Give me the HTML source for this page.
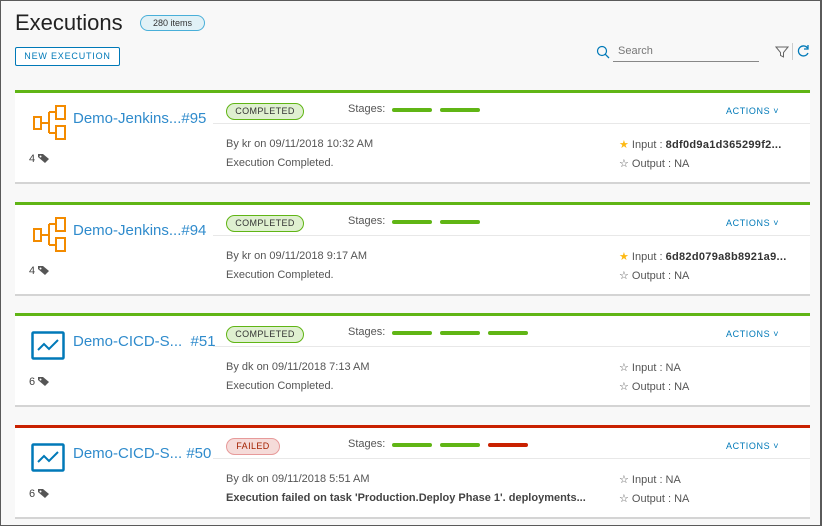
<!DOCTYPE html>
<html><head><meta charset="utf-8"><style>
*{box-sizing:border-box;margin:0;padding:0}
body{width:822px;height:526px;background:#f8f8f8;font-family:"Liberation Sans",sans-serif;position:relative;overflow:hidden;border:1px solid #5a5a5a;border-right:2px solid #5a5a5a}
.abs{position:absolute}
h1{position:absolute;left:14px;top:9px;font-size:22px;font-weight:400;color:#222}
.count{position:absolute;left:139px;top:14px;width:65px;height:16px;border:1px solid #49afd9;background:#e1f1f6;border-radius:9px;font-size:9px;color:#333;text-align:center;line-height:14px}
.btn{position:absolute;left:14px;top:46px;width:105px;height:19px;border:1px solid #0079b8;border-radius:2px;font-size:9px;letter-spacing:.8px;color:#0079b8;text-align:center;line-height:17px;background:#fff}
.search{position:absolute;left:612px;top:44px;width:146px;height:17px;border-bottom:1px solid #888;font-size:11px;color:#777;padding-left:5px}
.card{position:absolute;left:14px;width:795px;height:92px;background:#fff;border-top:3px solid #60b515;box-shadow:0 2px 0 #d4d4d4}
.card.f{border-top-color:#c92100}
.name{position:absolute;left:58px;top:17px;font-size:15px;color:#2f8bcc;white-space:nowrap}
.tags{position:absolute;left:14px;top:60px;font-size:11px;color:#444}
.tags svg{vertical-align:-2px;margin-left:2px}
.badge{position:absolute;left:211px;top:10px;width:78px;height:17px;border:1px solid #60b515;background:#dff0d0;border-radius:9px;font-size:9px;letter-spacing:.4px;color:#333;text-align:center;line-height:15px}
.badge.f{width:54px;border-color:#e79a9a;background:#f5dbd9;color:#a32100}
.stages{position:absolute;left:333px;top:10px;font-size:11px;color:#555}
.bar{position:absolute;top:15px;width:40px;height:4px;border-radius:2px;background:#60b515}
.div{position:absolute;left:198px;right:0;top:30px;border-top:1px solid #e8e8e8}
.by{position:absolute;left:211px;top:45px;font-size:11px;color:#555}
.msg{position:absolute;left:211px;top:64px;font-size:11px;color:#555;white-space:nowrap}
.actions{position:absolute;left:711px;top:13px;font-size:9px;letter-spacing:.6px;color:#0079b8}
.in{position:absolute;left:604px;top:45px;font-size:11px;color:#555;white-space:nowrap}
.out{position:absolute;left:604px;top:64px;font-size:11px;color:#555}
.in b{color:#333;letter-spacing:.3px}
</style></head><body>
<h1>Executions</h1><div class="count">280 items</div>
<div class="btn">NEW EXECUTION</div>
<svg class="abs" style="left:595px;top:44px" width="14" height="14" viewBox="0 0 14 14"><circle cx="6" cy="6" r="4.5" fill="none" stroke="#0079b8" stroke-width="1.2"/><path d="M9.3 9.3L13 13" stroke="#0079b8" stroke-width="1.3"/></svg>
<div class="search">Search</div>
<svg class="abs" style="left:774px;top:44px" width="14" height="14" viewBox="0 0 14 14"><path d="M1 2h12L8.5 7.5V12L5.5 10.5V7.5Z" fill="none" stroke="#666" stroke-width="1"/></svg>
<div class="abs" style="left:791px;top:42px;height:17px;border-left:1px solid #ccc"></div>
<svg class="abs" style="left:795px;top:43px" width="14" height="15" viewBox="0 0 14 15"><path d="M11.5 4A5 5 0 1 0 12 9" fill="none" stroke="#0079b8" stroke-width="1.3"/><path d="M12 1v4H8" fill="none" stroke="#0079b8" stroke-width="1.3"/></svg>

<div class="card" style="top:89px">
<svg class="abs" style="left:17px;top:10px" width="36" height="38" viewBox="0 0 36 38"><g fill="none" stroke="#f38b00" stroke-width="2"><rect x="2" y="14" width="7" height="12"/><rect x="24" y="3" width="9" height="13"/><rect x="24" y="23" width="9" height="13"/><path d="M9 20h8M17 9v21M17 9h7M17 30h7"/></g></svg>
<div class="name">Demo-Jenkins...#95</div><div class="tags">4<svg width="14" height="11" viewBox="0 0 14 11"><path d="M1 1h5l6 5-4 4-7-6Z" fill="#555"/><circle cx="3.5" cy="3.5" r="1" fill="#fff"/></svg></div>
<div class="badge">COMPLETED</div><div class="stages">Stages:</div>
<div class="bar" style="left:377px"></div><div class="bar" style="left:425px"></div>
<div class="actions">ACTIONS ˅</div><div class="div"></div>
<div class="by">By kr on 09/11/2018 10:32 AM</div><div class="msg">Execution Completed.</div>
<div class="in"><span style="color:#fdb913">★</span> Input : <b>8df0d9a1d365299f2...</b></div><div class="out">☆ Output : NA</div>
</div>

<div class="card" style="top:201px">
<svg class="abs" style="left:17px;top:10px" width="36" height="38" viewBox="0 0 36 38"><g fill="none" stroke="#f38b00" stroke-width="2"><rect x="2" y="14" width="7" height="12"/><rect x="24" y="3" width="9" height="13"/><rect x="24" y="23" width="9" height="13"/><path d="M9 20h8M17 9v21M17 9h7M17 30h7"/></g></svg>
<div class="name">Demo-Jenkins...#94</div><div class="tags">4<svg width="14" height="11" viewBox="0 0 14 11"><path d="M1 1h5l6 5-4 4-7-6Z" fill="#555"/><circle cx="3.5" cy="3.5" r="1" fill="#fff"/></svg></div>
<div class="badge">COMPLETED</div><div class="stages">Stages:</div>
<div class="bar" style="left:377px"></div><div class="bar" style="left:425px"></div>
<div class="actions">ACTIONS ˅</div><div class="div"></div>
<div class="by">By kr on 09/11/2018 9:17 AM</div><div class="msg">Execution Completed.</div>
<div class="in"><span style="color:#fdb913">★</span> Input : <b>6d82d079a8b8921a9...</b></div><div class="out">☆ Output : NA</div>
</div>

<div class="card" style="top:312px">
<svg class="abs" style="left:16px;top:15px" width="35" height="30" viewBox="0 0 35 30"><rect x="1.5" y="1.5" width="31" height="26" rx="1" fill="none" stroke="#0079b8" stroke-width="2.5"/><path d="M7 19l6-6 5 5 9-9" fill="none" stroke="#0079b8" stroke-width="2"/></svg>
<div class="name">Demo-CICD-S...&nbsp; #51</div><div class="tags">6<svg width="14" height="11" viewBox="0 0 14 11"><path d="M1 1h5l6 5-4 4-7-6Z" fill="#555"/><circle cx="3.5" cy="3.5" r="1" fill="#fff"/></svg></div>
<div class="badge">COMPLETED</div><div class="stages">Stages:</div>
<div class="bar" style="left:377px"></div><div class="bar" style="left:425px"></div><div class="bar" style="left:473px"></div>
<div class="actions">ACTIONS ˅</div><div class="div"></div>
<div class="by">By dk on 09/11/2018 7:13 AM</div><div class="msg">Execution Completed.</div>
<div class="in">☆ Input : NA</div><div class="out">☆ Output : NA</div>
</div>

<div class="card f" style="top:424px">
<svg class="abs" style="left:16px;top:15px" width="35" height="30" viewBox="0 0 35 30"><rect x="1.5" y="1.5" width="31" height="26" rx="1" fill="none" stroke="#0079b8" stroke-width="2.5"/><path d="M7 19l6-6 5 5 9-9" fill="none" stroke="#0079b8" stroke-width="2"/></svg>
<div class="name">Demo-CICD-S... #50</div><div class="tags">6<svg width="14" height="11" viewBox="0 0 14 11"><path d="M1 1h5l6 5-4 4-7-6Z" fill="#555"/><circle cx="3.5" cy="3.5" r="1" fill="#fff"/></svg></div>
<div class="badge f">FAILED</div><div class="stages">Stages:</div>
<div class="bar" style="left:377px"></div><div class="bar" style="left:425px"></div><div class="bar" style="left:473px;background:#c92100"></div>
<div class="actions">ACTIONS ˅</div><div class="div"></div>
<div class="by">By dk on 09/11/2018 5:51 AM</div><div class="msg" style="font-weight:bold;color:#444">Execution failed on task 'Production.Deploy Phase 1'. deployments...</div>
<div class="in">☆ Input : NA</div><div class="out">☆ Output : NA</div>
</div>
</body></html>
